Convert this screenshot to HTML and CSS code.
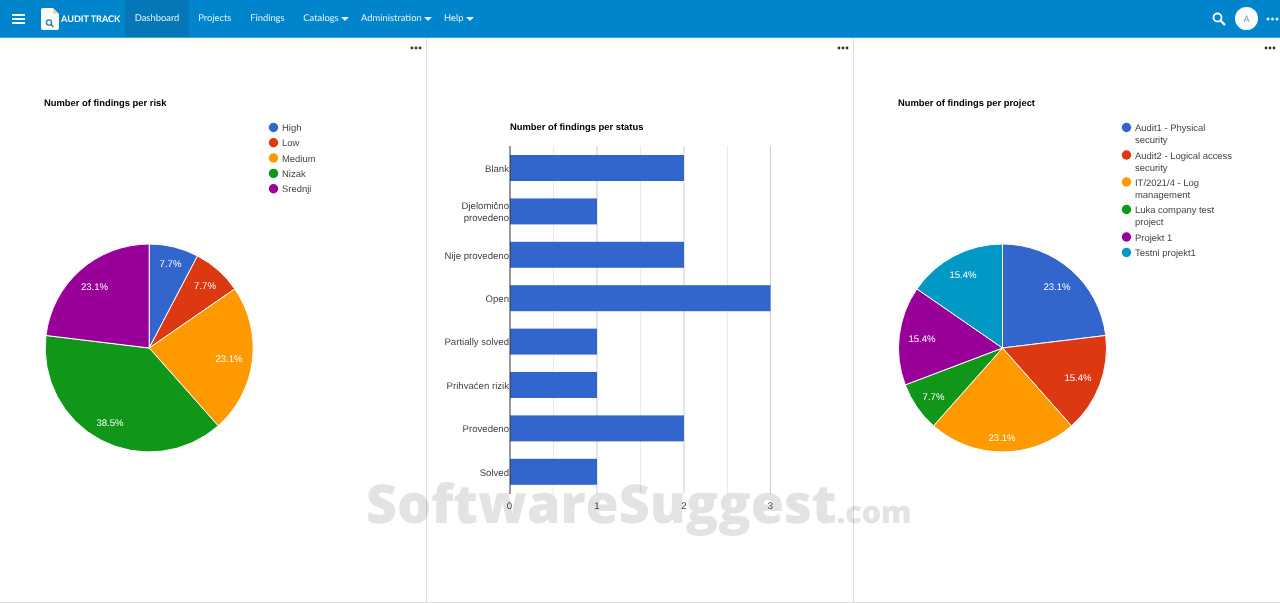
FILE: index.html
```html
<!DOCTYPE html>
<html lang="en">
<head>
    <meta charset="UTF-8">
    <meta name="viewport" content="width=device-width, initial-scale=1.0">
    <title>Audit Track - Dashboard</title>
    <link rel="stylesheet" href="styles.css">
</head>
<body>
    <nav class="navbar">
        <button class="burger"><span></span><span></span><span></span></button>
        <a class="brand">
            <svg class="brand-icon" width="18" height="22" viewBox="0 0 18 22">
                <path d="M2 0H12L18 6V20a2 2 0 0 1-2 2H2a2 2 0 0 1-2-2V2a2 2 0 0 1 2-2z" fill="#fff"/>
                <path d="M12 0.5V5a1 1 0 0 0 1 1h4.5z" fill="#f0d9a0"/>
                <circle cx="8" cy="14.5" r="2.6" fill="none" stroke="#2a7fb0" stroke-width="1.4"/>
                <path d="M10 16.5l2.4 2.4" stroke="#44606e" stroke-width="1.4"/>
            </svg>
            AUDIT TRACK
        </a>
        <ul class="menu">
            <li class="active">Dashboard</li>
            <li>Projects</li>
            <li>Findings</li>
            <li class="drop">Catalogs</li>
            <li class="drop">Administration</li>
            <li class="drop">Help</li>
        </ul>
        <div class="nav-right">
            <svg class="search" width="14" height="14" viewBox="0 0 14 14">
                <circle cx="5.5" cy="5.5" r="4" fill="none" stroke="#fff" stroke-width="1.8"/>
                <path d="M8.5 8.5L13 13" stroke="#fff" stroke-width="2.2"/>
            </svg>
            <div class="avatar">A</div>
            <svg class="more-light" width="13" height="4" viewBox="0 0 13 4">
                <circle cx="2" cy="2" r="1.5"/><circle cx="6.5" cy="2" r="1.5"/><circle cx="11" cy="2" r="1.5"/>
            </svg>
        </div>
    </nav>

    <main class="dashboard">
        <section class="panel">
            <svg class="more" width="12" height="4" viewBox="0 0 12 4"><circle cx="2" cy="2" r="1.4"/><circle cx="6" cy="2" r="1.4"/><circle cx="10" cy="2" r="1.4"/></svg>
            <svg class="chart" width="426" height="564" viewBox="0 38 426 564">
                <text class="title" x="44" y="106">Number of findings per risk</text>
                <g class="legend">
                    <circle class="c1" cx="273.5" cy="127.5" r="4.7"/><text x="282" y="131">High</text>
                    <circle class="c2" cx="273.5" cy="142.8" r="4.7"/><text x="282" y="146.3">Low</text>
                    <circle class="c3" cx="273.5" cy="158" r="4.7"/><text x="282" y="161.6">Medium</text>
                    <circle class="c4" cx="273.5" cy="173.4" r="4.7"/><text x="282" y="176.9">Nizak</text>
                    <circle class="c5" cx="273.5" cy="188.7" r="4.7"/><text x="282" y="192.2">Srednji</text>
                </g>
                <g class="pie" transform="translate(149.2 348)">
                    <path class="c1" d="M0 0V-104A104 104 0 0 1 48.33 -92.09Z"/>
                    <path class="c2" d="M0 0L48.33 -92.09A104 104 0 0 1 85.59 -59.08Z"/>
                    <path class="c3" d="M0 0L85.59 -59.08A104 104 0 0 1 68.96 77.84Z"/>
                    <path class="c4" d="M0 0L68.96 77.84A104 104 0 0 1 -103.24 -12.53Z"/>
                    <path class="c5" d="M0 0L-103.24 -12.53A104 104 0 0 1 0 -104Z"/>
                </g>
                <g class="slice-label">
                    <text x="170.5" y="267">7.7%</text>
                    <text x="205" y="289">7.7%</text>
                    <text x="229" y="362">23.1%</text>
                    <text x="110" y="426">38.5%</text>
                    <text x="94.5" y="290">23.1%</text>
                </g>
            </svg>
        </section>

        <section class="panel">
            <svg class="more" width="12" height="4" viewBox="0 0 12 4"><circle cx="2" cy="2" r="1.4"/><circle cx="6" cy="2" r="1.4"/><circle cx="10" cy="2" r="1.4"/></svg>
            <svg class="chart" width="426" height="564" viewBox="427 38 426 564">
                <text class="title" x="510" y="130">Number of findings per status</text>
                <g class="grid-minor">
                    <path d="M553.5 146V494M640.5 146V494M727.5 146V494"/>
                </g>
                <g class="grid-major">
                    <path d="M597 146V494M684 146V494M770.5 146V494"/>
                </g>
                <g class="c1">
                    <rect x="510" y="155" width="174" height="26"/>
                    <rect x="510" y="198.4" width="87" height="26"/>
                    <rect x="510" y="241.8" width="174" height="26"/>
                    <rect x="510" y="285.2" width="260.5" height="26"/>
                    <rect x="510" y="328.6" width="87" height="26"/>
                    <rect x="510" y="372" width="87" height="26"/>
                    <rect x="510" y="415.4" width="174" height="26"/>
                    <rect x="510" y="458.8" width="87" height="26"/>
                </g>
                <path class="axis" d="M510 146V494"/>
                <g class="axis-label end">
                    <text x="509" y="171.5">Blank</text>
                    <text x="509" y="209">Djelomično</text>
                    <text x="509" y="221">provedeno</text>
                    <text x="509" y="258.5">Nije provedeno</text>
                    <text x="509" y="301.5">Open</text>
                    <text x="509" y="345">Partially solved</text>
                    <text x="509" y="388.5">Prihvaćen rizik</text>
                    <text x="509" y="431.5">Provedeno</text>
                    <text x="509" y="475.5">Solved</text>
                </g>
                <g class="axis-label mid">
                    <text x="509.5" y="508.5">0</text>
                    <text x="597" y="508.5">1</text>
                    <text x="684" y="508.5">2</text>
                    <text x="770.5" y="508.5">3</text>
                </g>
            </svg>
        </section>

        <section class="panel">
            <svg class="more" width="12" height="4" viewBox="0 0 12 4"><circle cx="2" cy="2" r="1.4"/><circle cx="6" cy="2" r="1.4"/><circle cx="10" cy="2" r="1.4"/></svg>
            <svg class="chart" width="426" height="564" viewBox="854 38 426 564">
                <text class="title" x="898" y="106">Number of findings per project</text>
                <g class="legend">
                    <circle class="c1" cx="1126.5" cy="127.5" r="4.7"/><text x="1135" y="131">Audit1 - Physical</text><text x="1135" y="143">security</text>
                    <circle class="c2" cx="1126.5" cy="155" r="4.7"/><text x="1135" y="158.5">Audit2 - Logical access</text><text x="1135" y="170.5">security</text>
                    <circle class="c3" cx="1126.5" cy="182" r="4.7"/><text x="1135" y="186">IT/2021/4 - Log</text><text x="1135" y="198">management</text>
                    <circle class="c4" cx="1126.5" cy="209.5" r="4.7"/><text x="1135" y="213">Luka company test</text><text x="1135" y="225">project</text>
                    <circle class="c5" cx="1126.5" cy="237" r="4.7"/><text x="1135" y="240.5">Projekt 1</text>
                    <circle class="c6" cx="1126.5" cy="252.5" r="4.7"/><text x="1135" y="256">Testni projekt1</text>
                </g>
                <g class="pie" transform="translate(1002.5 348)">
                    <path class="c1" d="M0 0V-104A104 104 0 0 1 103.24 -12.53Z"/>
                    <path class="c2" d="M0 0L103.24 -12.53A104 104 0 0 1 68.96 77.84Z"/>
                    <path class="c3" d="M0 0L68.96 77.84A104 104 0 0 1 -68.96 77.84Z"/>
                    <path class="c4" d="M0 0L-68.96 77.84A104 104 0 0 1 -97.24 36.88Z"/>
                    <path class="c5" d="M0 0L-97.24 36.88A104 104 0 0 1 -85.59 -59.08Z"/>
                    <path class="c6" d="M0 0L-85.59 -59.08A104 104 0 0 1 0 -104Z"/>
                </g>
                <g class="slice-label">
                    <text x="1057" y="290">23.1%</text>
                    <text x="1078" y="381">15.4%</text>
                    <text x="1002" y="441">23.1%</text>
                    <text x="933.5" y="399.5">7.7%</text>
                    <text x="922" y="342">15.4%</text>
                    <text x="963" y="277.5">15.4%</text>
                </g>
            </svg>
        </section>
    </main>

    <div class="watermark">SoftwareSuggest<span>.com</span></div>
</body>
</html>
```

FILE: styles.css
```css
html, body {
    margin: 0;
    padding: 0;
    height: 100%;
    overflow: hidden;
    background: #fff;
}
body {
    position: relative;
    font-family: "Liberation Sans", Arial, sans-serif;
    text-rendering: geometricPrecision;
}
.navbar {
    display: flex;
    align-items: center;
    height: 38px;
    box-sizing: border-box;
    background: #0084cb;
    border-bottom: 1px solid #35a6de;
    color: #e6f3fa;
    font-family: Lato, sans-serif;
    font-size: 9.4px;
}
.burger {
    display: flex;
    flex-direction: column;
    gap: 2px;
    width: 13px;
    margin-left: 12px;
    padding: 0;
    border: none;
    background: none;
}
.burger span {
    display: block;
    height: 2px;
    background: #f2f9fd;
}
.brand {
    display: flex;
    align-items: center;
    gap: 2px;
    margin-left: 16px;
    font-weight: 700;
    font-size: 9.1px;
    color: #fff;
}
.menu {
    display: flex;
    align-self: stretch;
    margin: 0 0 0 5px;
    padding: 0;
    list-style: none;
}
.menu li {
    display: flex;
    align-items: center;
    padding: 0 9.4px;
}
.menu li.active {
    background: #0677b6;
}
.menu li.drop {
    padding-right: 3px;
}
.menu li.drop::after {
    content: "";
    margin-left: 2px;
    border: 4px solid transparent;
    border-top-color: #e6f3fa;
    border-bottom: none;
}
.nav-right {
    display: flex;
    align-items: center;
    margin-left: auto;
    padding-right: 1px;
}
.avatar {
    display: flex;
    align-items: center;
    justify-content: center;
    width: 23px;
    height: 23px;
    margin: 0 8px 0 9px;
    border-radius: 50%;
    background: #fff;
    color: #7d9a94;
    font-size: 9px;
}
.more-light {
    fill: #e6f3fa;
}

.dashboard {
    display: grid;
    grid-template-columns: repeat(3, 1fr);
    height: 565px;
    box-sizing: border-box;
    border-bottom: 1px solid #dcdcdc;
}
.panel {
    position: relative;
    border-right: 1px solid #dcdcdc;
}
.chart {
    display: block;
}
.more {
    position: absolute;
    top: 8px;
    right: 4px;
    fill: #333;
}

.title {
    font-size: 9.4px;
    font-weight: 700;
    fill: #000;
}
.legend text {
    font-size: 9.45px;
    fill: #444;
}
.slice-label text {
    font-size: 9.6px;
    fill: #fff;
    text-anchor: middle;
}
.pie path {
    stroke: #fff;
    stroke-width: 1;
}
.c1 { fill: #3366cc; }
.c2 { fill: #dc3912; }
.c3 { fill: #ff9900; }
.c4 { fill: #109618; }
.c5 { fill: #990099; }
.c6 { fill: #0099c6; }

.grid-minor path {
    stroke: #ebebeb;
    fill: none;
}
.grid-major path {
    stroke: #cccccc;
    fill: none;
}
.axis {
    stroke: #333;
    fill: none;
}
.axis-label text {
    font-size: 9.6px;
    fill: #444;
}
.axis-label.end text {
    text-anchor: end;
}
.axis-label.mid text {
    text-anchor: middle;
}

.watermark {
    position: absolute;
    left: 366px;
    top: 465px;
    font-family: "Open Sans", sans-serif;
    font-weight: 800;
    font-size: 53.7px;
    line-height: 76px;
    color: #e3e3e3;
    mix-blend-mode: multiply;
    white-space: nowrap;
    pointer-events: none;
}
.watermark span {
    font-size: 30.5px;
}
```
